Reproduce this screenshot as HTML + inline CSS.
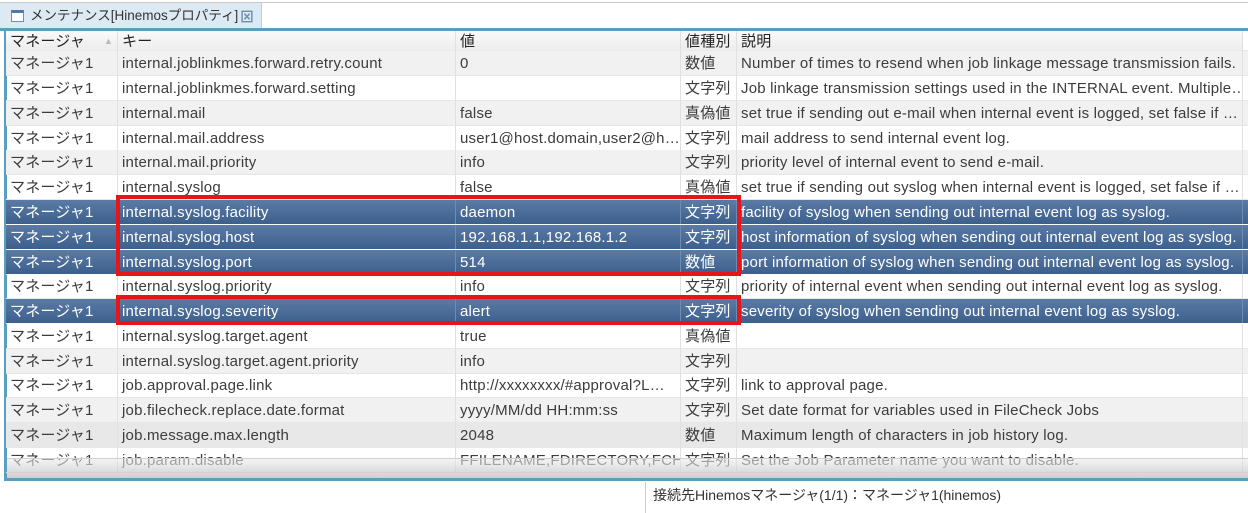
<!DOCTYPE html><html><head><meta charset="utf-8"><style>
*{margin:0;padding:0;box-sizing:border-box}
body{width:1248px;height:513px;background:#fff;font-family:"Liberation Sans","Noto Sans CJK JP",sans-serif;font-size:15px;letter-spacing:.2px;color:#3c3c3c;position:relative;overflow:hidden}
.a{position:absolute}
.row{position:absolute;left:6px;width:1242px;height:25px;border-bottom:1px solid #e6e6e6}
.row div{position:absolute;top:0;height:24px;line-height:26px;white-space:nowrap;overflow:hidden;border-right:1px solid #e0e0e0;padding-left:4px}
.g{background:#f1f1f1}
.s{background:linear-gradient(#5a7ba5,#3d5f8c);color:#fff;border-bottom:1px solid #fff}
.s div{border-right:1px solid #6f8bb0}
.c1{left:0;width:112px}.c2{left:112px;width:338px}.c3{left:450px;width:225px}.c4{left:675px;width:56px}.c5{left:731px;width:506px}
.hd div{background:linear-gradient(#fafafa,#ececec);color:#222}
</style></head><body>
<div class="a" style="left:0;top:2px;width:1248px;height:1px;background:#c8c8c8"></div>
<div class="a" style="left:0;top:3px;width:262px;height:26px;background:#dde9f3;border-right:1px solid #b9cfe0"></div>
<div class="a" style="left:11px;top:10px;width:13px;height:12px;border:1px solid #6a8fb0;border-top:3px solid #4f7aa3;background:#fff"></div>
<div class="a" style="left:30px;top:6px;line-height:20px;color:#333;font-size:13.5px;letter-spacing:0">メンテナンス[Hinemosプロパティ]</div>
<div class="a" style="left:240px;top:7px;font-size:14px;color:#6f8fae;font-weight:bold">⊠</div>
<div class="a" style="left:0;top:28px;width:1248px;height:3px;background:#5a9fc0"></div>
<div class="a" style="left:4px;top:28px;width:3px;height:453px;background:#5a9fc0"></div>
<div class="a" style="left:4px;top:478px;width:1244px;height:3px;background:#5a9fc0"></div>
<div class="row hd" style="top:31px;height:20px"><div class="c1" style="height:20px;line-height:21px">マネージャ<span style="position:absolute;left:98px;color:#bbb;font-size:9px">▲</span></div><div class="c2" style="height:20px;line-height:21px">キー</div><div class="c3" style="height:20px;line-height:21px">値</div><div class="c4" style="height:20px;line-height:21px">値種別</div><div class="c5" style="height:20px;line-height:21px">説明</div></div>

<div class="row g" style="top:51px"><div class="c1">マネージャ1</div><div class="c2">internal.joblinkmes.forward.retry.count</div><div class="c3">0</div><div class="c4">数値</div><div class="c5">Number of times to resend when job linkage message transmission fails.</div></div>
<div class="row" style="top:76px"><div class="c1">マネージャ1</div><div class="c2">internal.joblinkmes.forward.setting</div><div class="c3"></div><div class="c4">文字列</div><div class="c5">Job linkage transmission settings used in the INTERNAL event. Multiple…</div></div>
<div class="row g" style="top:101px"><div class="c1">マネージャ1</div><div class="c2">internal.mail</div><div class="c3">false</div><div class="c4">真偽値</div><div class="c5">set true if sending out e-mail when internal event is logged, set false if …</div></div>
<div class="row" style="top:126px"><div class="c1">マネージャ1</div><div class="c2">internal.mail.address</div><div class="c3">user1@host.domain,user2@h…</div><div class="c4">文字列</div><div class="c5">mail address to send internal event log.</div></div>
<div class="row g" style="top:150px"><div class="c1">マネージャ1</div><div class="c2">internal.mail.priority</div><div class="c3">info</div><div class="c4">文字列</div><div class="c5">priority level of internal event to send e-mail.</div></div>
<div class="row" style="top:175px"><div class="c1">マネージャ1</div><div class="c2">internal.syslog</div><div class="c3">false</div><div class="c4">真偽値</div><div class="c5">set true if sending out syslog when internal event is logged, set false if …</div></div>
<div class="row s" style="top:200px"><div class="c1">マネージャ1</div><div class="c2">internal.syslog.facility</div><div class="c3">daemon</div><div class="c4">文字列</div><div class="c5">facility of syslog when sending out internal event log as syslog.</div></div>
<div class="row s" style="top:225px"><div class="c1">マネージャ1</div><div class="c2">internal.syslog.host</div><div class="c3">192.168.1.1,192.168.1.2</div><div class="c4">文字列</div><div class="c5">host information of syslog when sending out internal event log as syslog.</div></div>
<div class="row s" style="top:250px"><div class="c1">マネージャ1</div><div class="c2">internal.syslog.port</div><div class="c3">514</div><div class="c4">数値</div><div class="c5">port information of syslog when sending out internal event log as syslog.</div></div>
<div class="row" style="top:274px"><div class="c1">マネージャ1</div><div class="c2">internal.syslog.priority</div><div class="c3">info</div><div class="c4">文字列</div><div class="c5">priority of internal event when sending out internal event log as syslog.</div></div>
<div class="row s" style="top:299px"><div class="c1">マネージャ1</div><div class="c2">internal.syslog.severity</div><div class="c3">alert</div><div class="c4">文字列</div><div class="c5">severity of syslog when sending out internal event log as syslog.</div></div>
<div class="row" style="top:324px"><div class="c1">マネージャ1</div><div class="c2">internal.syslog.target.agent</div><div class="c3">true</div><div class="c4">真偽値</div><div class="c5"></div></div>
<div class="row g" style="top:349px"><div class="c1">マネージャ1</div><div class="c2">internal.syslog.target.agent.priority</div><div class="c3">info</div><div class="c4">文字列</div><div class="c5"></div></div>
<div class="row" style="top:373px"><div class="c1">マネージャ1</div><div class="c2">job.approval.page.link</div><div class="c3">http://xxxxxxxx/#approval?L…</div><div class="c4">文字列</div><div class="c5">link to approval page.</div></div>
<div class="row g" style="top:398px"><div class="c1">マネージャ1</div><div class="c2">job.filecheck.replace.date.format</div><div class="c3">yyyy/MM/dd HH:mm:ss</div><div class="c4">文字列</div><div class="c5">Set date format for variables used in FileCheck Jobs</div></div>
<div class="row g" style="top:423px;background:#e8e8e8"><div class="c1">マネージャ1</div><div class="c2">job.message.max.length</div><div class="c3">2048</div><div class="c4">数値</div><div class="c5">Maximum length of characters in job history log.</div></div>
<div class="row" style="top:448px"><div class="c1">マネージャ1</div><div class="c2">job.param.disable</div><div class="c3">FFILENAME,FDIRECTORY,FCH…</div><div class="c4">文字列</div><div class="c5">Set the Job Parameter name you want to disable.</div></div>
<div class="a" style="left:7px;top:458px;width:1241px;height:20px;background:linear-gradient(rgba(235,235,235,.55),rgba(200,200,200,.85));border-top:1px solid #d0d0d0"></div>

<div class="a" style="left:116px;top:195px;width:625px;height:81px;border:4px solid #e8141c"></div>
<div class="a" style="left:116px;top:295px;width:625px;height:30px;border:4px solid #e8141c"></div>

<div class="a" style="left:645px;top:482px;width:1px;height:31px;background:#ccc"></div>
<div class="a" style="left:653px;top:486px;line-height:18px;color:#333;font-size:14px;letter-spacing:0">接続先Hinemosマネージャ(1/1)：マネージャ1(hinemos)</div>
</body></html>
